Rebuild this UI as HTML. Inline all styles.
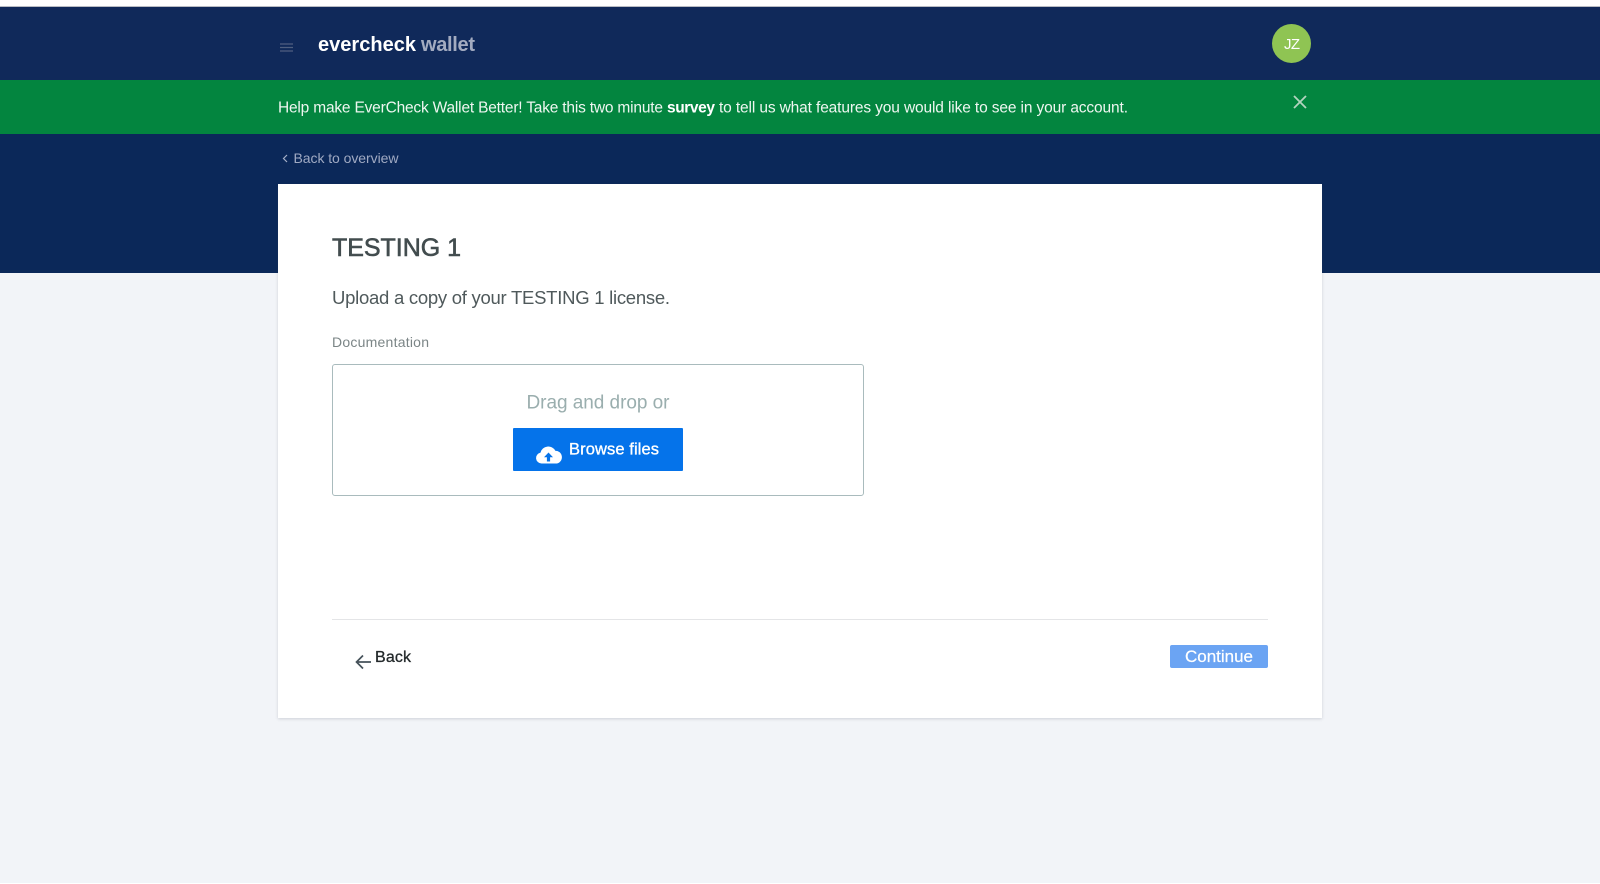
<!DOCTYPE html>
<html lang="en">
<head>
<meta charset="utf-8">
<title>EverCheck Wallet</title>
<style>
html,body{margin:0;padding:0;width:1600px;height:884px;overflow:hidden;background:#f2f4f8}
body{position:relative;font-family:"Liberation Sans",sans-serif}
.b{position:absolute;box-sizing:border-box}
svg.o{position:absolute;left:0;top:0}
text{font-family:"Liberation Sans",sans-serif}
</style>
</head>
<body>
<div class="b" style="left:0;top:0;width:1600px;height:7px;background:#fff;border-bottom:1px solid #b9bcc4"></div>
<div class="b" style="left:0;top:7px;width:1600px;height:73px;background:#10295a"></div>
<div class="b" style="left:0;top:80px;width:1600px;height:54px;background:#03853f"></div>
<div class="b" style="left:0;top:134px;width:1600px;height:139px;background:#0b2859"></div>
<div class="b" style="left:278px;top:184px;width:1044px;height:533.500px;background:#fff;box-shadow:0 1px 3px rgba(60,70,90,.2)"></div>
<div class="b" style="left:1272px;top:24px;width:39px;height:39px;border-radius:50%;background:#8fc453"></div>
<div class="b" style="left:332px;top:364px;width:532px;height:132px;border:1px solid #a9bbbd;border-radius:3px;background:#fff"></div>
<div class="b" style="left:513px;top:428px;width:170px;height:43px;background:#0573ea;border-radius:1px"></div>
<div class="b" style="left:332px;top:619px;width:936px;height:1px;background:#e4e5e7"></div>
<div class="b" style="left:1170px;top:645px;width:98px;height:23px;background:#6ba4f3;border-radius:2px"></div>
<div class="b" style="left:0;top:883px;width:1600px;height:1px;background:#fff"></div>
<svg class="o" width="1600" height="884" viewBox="0 0 1600 884" xmlns="http://www.w3.org/2000/svg">
  <path d="M280 44H293M280 47.500H293M280 51H293" stroke="#4f5f80" stroke-width="1.300" fill="none"/>
  <text x="318" y="51" font-size="20" font-weight="700" fill="#fff" textLength="98">evercheck</text>
  <text x="421" y="51" font-size="20" font-weight="700" fill="#a3abc0" textLength="54">wallet</text>
  <text x="1284" y="49" font-size="15" fill="#fff" textLength="16">JZ</text>

  <text x="278" y="112.500" font-size="15.500" fill="#eef6f0" textLength="385">Help make EverCheck Wallet Better! Take this two minute</text>
  <text x="667" y="112.500" font-size="15.500" font-weight="700" fill="#fff" textLength="48">survey</text>
  <text x="719" y="112.500" font-size="15.500" fill="#eef6f0" textLength="409">to tell us what features you would like to see in your account.</text>
  <path d="M1294 96L1306 108M1306 96L1294 108" stroke="#b4d4bf" stroke-width="1.800" fill="none"/>

  <path d="M287 155L283.500 158.500L287 162" stroke="#a7b1c8" stroke-width="1.200" fill="none"/>
  <text x="293.500" y="163" font-size="14" fill="#a0aac3" textLength="105">Back to overview</text>

  <text x="332" y="256" font-size="25" font-weight="400" fill="#424c4e" stroke="#424c4e" stroke-width=".6" textLength="129">TESTING 1</text>
  <text x="332" y="304" font-size="18.500" fill="#4f595b" textLength="338">Upload a copy of your TESTING 1 license.</text>
  <text x="332" y="347" font-size="14" fill="#7b8586" textLength="97">Documentation</text>
  <text x="526.500" y="408.500" font-size="19" fill="#9aaeae" textLength="143">Drag and drop or</text>

  <path d="M541.500 463.500a5.500 5.500 0 0 1-1-10.900a8 8 0 0 1 14.800-1.900a6.500 6.500 0 0 1 1.700 12.800z" fill="#fff"/>
  <path d="M548.500 452.500l-4.500 4.800h2.900v4.200h3.200v-4.200h2.900z" fill="#0573ea"/>
  <text x="569" y="454.500" font-size="16.500" font-weight="400" fill="#fff" stroke="#fff" stroke-width=".35" textLength="90">Browse files</text>

  <path d="M371 662H356.500M363 655.500L356.500 662L363 668.500" stroke="#46525a" stroke-width="1.700" fill="none"/>
  <text x="375" y="662" font-size="16" fill="#23292b" stroke="#23292b" stroke-width=".3" textLength="36">Back</text>
  <text x="1185" y="662" font-size="17" fill="#fff" stroke="#fff" stroke-width=".2" textLength="68">Continue</text>
</svg>
</body>
</html>
